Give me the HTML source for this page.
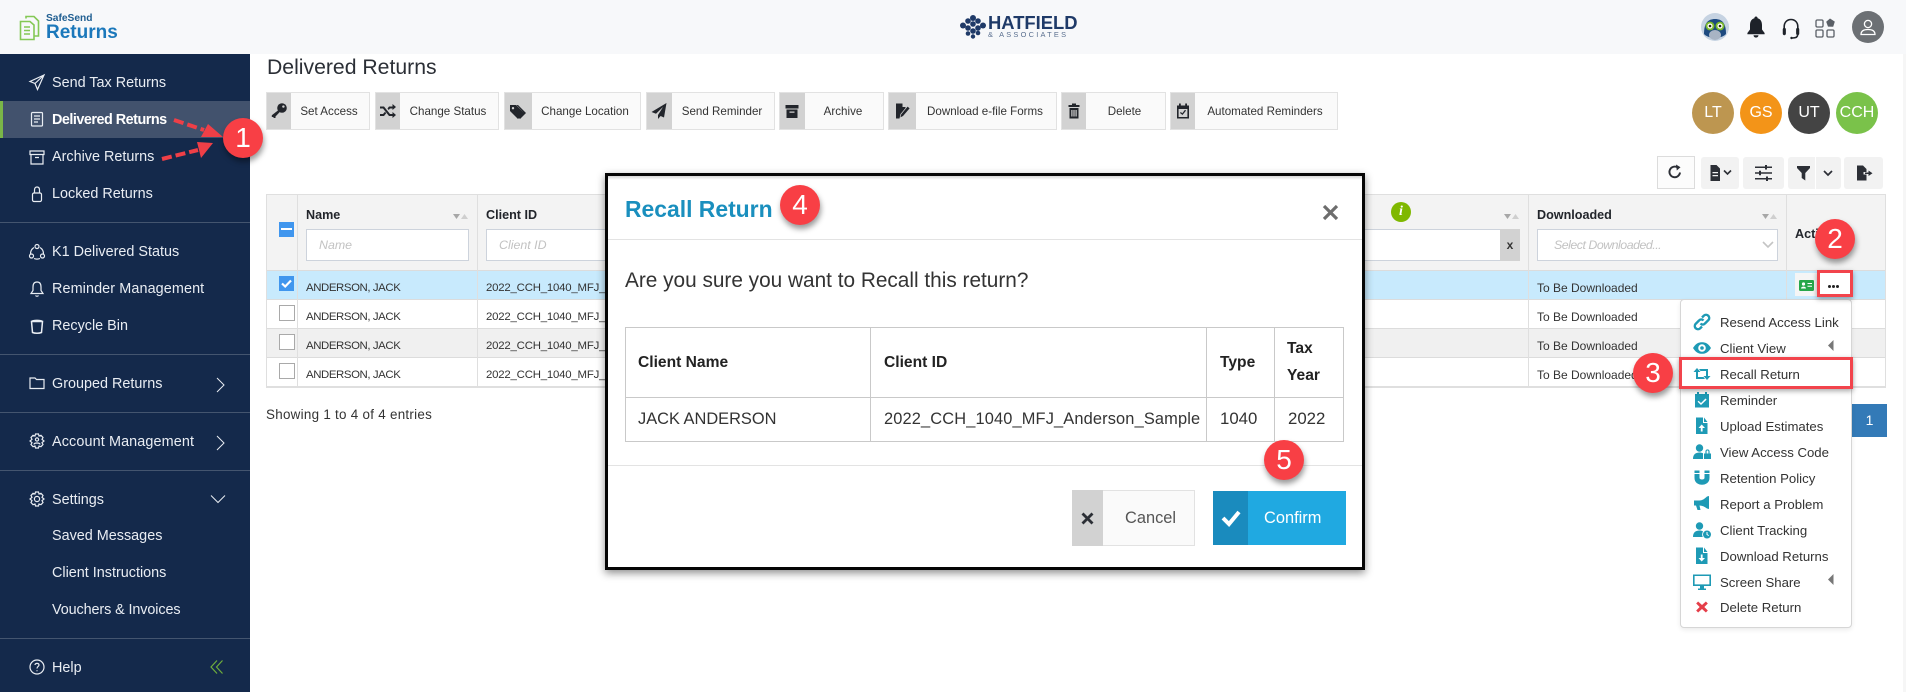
<!DOCTYPE html>
<html><head><meta charset="utf-8"><title>Delivered Returns</title>
<style>
html,body{margin:0;padding:0;background:#fff}
body{width:1906px;height:692px;position:relative;overflow:hidden;font-family:"Liberation Sans",sans-serif;color:#333}
.a{position:absolute}
.t{position:absolute;white-space:nowrap;line-height:20px;height:20px}
.s{font-size:14.4px;color:#e9edf3;left:52px}
.d{position:absolute;left:0;width:250px;height:1px;background:#44556f}
.si{position:absolute;left:28px;width:18px;height:18px;fill:none;stroke:#e9edf3;stroke-width:1.2}
.b{position:absolute;top:92px;height:36px;background:#fafafa;border:1px solid #e2e2e2;box-sizing:content-box;font-size:11.6px;color:#333;line-height:38px;text-align:center}
.b i{position:absolute;left:0;top:0;bottom:0;background:#d2d2d2;display:block}
.b svg{position:absolute;top:9px;width:18px;height:18px;fill:#22252b}
.b span{position:absolute;right:2px;top:0;bottom:0}
.c{position:absolute;width:42px;height:42px;top:92px;border-radius:50%;color:#fff;font-size:16px;line-height:42px;text-align:center}
.tb{position:absolute;top:157px;height:32px;background:#f2f2f2;border-radius:3px}
.tb svg{position:absolute;fill:#2c2f36}
.r{position:absolute;left:266px;width:1620px;height:28px;border-bottom:1px solid #dcdcdc}
.v{position:absolute;top:194px;height:193px;width:1px;background:#dfdfdf}
.n{font-size:11.4px;letter-spacing:-.4px;color:#333;left:306px}
.i{font-size:11.4px;letter-spacing:-.2px;color:#333;left:486px}
.l{font-size:12px;color:#333;left:1537px}
.k{position:absolute;left:279px;width:14px;height:14px;border:1px solid #a9a9a9;background:#fff}
.h{font-size:12.6px;font-weight:bold;color:#22252b}
.inp{position:absolute;top:229px;height:30px;border:1px solid #cdd3dc;background:#fff;box-sizing:content-box}
.ph{font-style:italic;color:#c2c2c2;font-size:12.4px}
.sort{position:absolute;width:15px;height:6px;top:214px}
.m{font-size:13.2px;color:#333;left:1720px}
.mi{position:absolute;left:1693px;width:18px;height:18px;fill:#1e9ab5}
.badge{position:absolute;width:40px;height:40px;border-radius:50%;background:#f83f45;color:#fff;font-size:28px;line-height:40px;text-align:center;box-shadow:1px 4px 6px rgba(0,0,0,.4);z-index:30}
.mc{position:absolute;font-size:16.4px;color:#333;white-space:nowrap;line-height:20px}
.mh{position:absolute;font-size:15.6px;font-weight:bold;color:#222;white-space:nowrap;line-height:20px}
</style></head><body>

<div class="a" style="left:0;top:0;width:1906px;height:54px;background:#f7f8fa"></div>
<div class="a" style="left:1903px;top:54px;width:3px;height:638px;background:#f6f6f6"></div>

<svg class="a" style="left:19px;top:15px" width="21" height="26" viewBox="0 0 21 26" fill="none" stroke="#84c855" stroke-width="1.6">
<path d="M7 3.5V1.5H15L19.5 6V21H15.5"/><path d="M1.5 6.5H11L15 10V24.5H1.5Z"/><path d="M5 12H11M5 15.5H11M5 19H11" stroke-width="1.4"/></svg>
<div class="t" style="left:46px;top:9px;font-size:10.2px;font-weight:bold;color:#1f5e91">SafeSend</div>
<div class="t" style="left:46px;top:23px;font-size:19px;font-weight:bold;color:#1b78bb">Returns</div>

<svg class="a" style="left:960px;top:15px" width="26" height="24" viewBox="0 0 26 24" fill="#1f3a68">
<circle cx="13" cy="3" r="3"/><circle cx="8" cy="6" r="2.8"/><circle cx="18" cy="6" r="2.8"/><circle cx="3" cy="10.5" r="3"/><circle cx="23" cy="10.5" r="3"/><circle cx="13" cy="9" r="2.8"/><circle cx="8" cy="13" r="2.8"/><circle cx="18" cy="13" r="2.8"/><circle cx="13" cy="16" r="2.8"/><circle cx="8" cy="18.5" r="2.3"/><circle cx="18" cy="18" r="2.3"/><circle cx="13" cy="21.5" r="2.2"/></svg>
<div class="t" style="left:988px;top:13px;font-size:18.4px;font-weight:bold;color:#1f3a68">HATFIELD</div>
<div class="t" style="left:988px;top:25px;font-size:7.4px;color:#5a6f8f;letter-spacing:2.25px">&amp; ASSOCIATES</div>

<svg class="a" style="left:1701px;top:13px" width="28" height="28" viewBox="0 0 28 28">
<circle cx="14" cy="14" r="14" fill="#c6d3e2"/><path d="M3 21C3 10 7 6 14 6S25 10 25 21C21 26 7 26 3 21Z" fill="#1d4a80"/>
<ellipse cx="14" cy="22" rx="6" ry="5" fill="#a8b4c4"/><circle cx="9" cy="13" r="4.4" fill="#7dbb2c"/><circle cx="19" cy="13" r="4.4" fill="#7dbb2c"/><circle cx="9" cy="13" r="2.6" fill="#fff"/><circle cx="19" cy="13" r="2.6" fill="#fff"/><circle cx="9" cy="13" r="1.3" fill="#222"/><circle cx="19" cy="13" r="1.3" fill="#222"/></svg>
<svg class="a" style="left:1747px;top:16px" width="18" height="22" viewBox="0 0 18 22" fill="#1e2229"><path d="M9 0.5C10 .5 10.6 1.2 10.6 2.2 13.6 3 15 5.6 15 9V13.5L17.6 17V18.2H.4V17L3 13.5V9C3 5.6 4.4 3 7.4 2.2 7.4 1.2 8 .5 9 .5Z"/><path d="M6.5 19.3H11.5C11.4 20.8 10.4 21.6 9 21.6S6.6 20.8 6.5 19.3Z"/></svg>
<svg class="a" style="left:1782px;top:18px" width="18" height="22" viewBox="0 0 18 22" fill="none" stroke="#1e2229" stroke-width="1.6"><path d="M2.2 12V8.5C2.2 4.5 5 1.5 9 1.5S15.8 4.5 15.8 8.5V12"/><rect x="1" y="10" width="2.6" height="7" rx="1.2" fill="#1e2229" stroke-width=".5"/><rect x="14.4" y="10" width="2.6" height="7" rx="1.2" fill="#1e2229" stroke-width=".5"/><path d="M15.6 17C15.6 19 14 20 10.5 20"/><circle cx="9.5" cy="20" r="1.2" fill="#1e2229" stroke="none"/></svg>
<svg class="a" style="left:1815px;top:18px" width="20" height="20" viewBox="0 0 20 20" fill="none" stroke="#5a5f66" stroke-width="1.3"><rect x="1" y="2" width="7" height="7" rx="1.2"/><rect x="1" y="12" width="7" height="7" rx="1.2"/><rect x="12" y="12" width="7" height="7" rx="1.2"/><path d="M15 .5L19.8 3.6 18.2 8.8 13 8.6 11.2 3.8Z" fill="#5a5f66" stroke="none"/></svg>
<div class="a" style="left:1852px;top:11px;width:32px;height:32px;border-radius:50%;background:#6c7074"></div>
<svg class="a" style="left:1859px;top:19px" width="18" height="17" viewBox="0 0 18 17" fill="none" stroke="#fff" stroke-width="1.3"><circle cx="9" cy="5" r="3.6"/><path d="M2 15.5C2 12 4.5 10.5 9 10.5S16 12 16 15.5Z"/></svg>

<!-- sidebar -->
<div class="a" style="left:0;top:54px;width:250px;height:638px;background:#14294b"></div>
<div class="a" style="left:0;top:101px;width:250px;height:37px;background:#42526d"></div>
<div class="a" style="left:0;top:101px;width:3px;height:37px;background:#7ab648"></div>
<svg class="si" style="top:73px" viewBox="0 0 18 18"><path d="M16 2L2 8.5 7 10.5 9.5 16.5ZM7 10.5L16 2"/></svg>
<div class="t s" style="top:73px">Send Tax Returns</div>
<svg class="si" style="top:110px" viewBox="0 0 18 18"><rect x="3.5" y="2.5" width="11" height="13.5" rx="1"/><path d="M6 6H12M6 9H12M6 12H10"/></svg>
<div class="t s" style="top:110px;font-weight:bold;color:#fff;letter-spacing:-.5px">Delivered Returns</div>
<svg class="si" style="top:148px" viewBox="0 0 18 18"><path d="M2 3H16V6.5H2ZM3 6.5V16H15V6.5M7 9.5H11"/></svg>
<div class="t s" style="top:147px">Archive Returns</div>
<svg class="si" style="top:185px" viewBox="0 0 18 18"><rect x="4.5" y="8" width="9" height="8.5" rx="1.5"/><path d="M6.5 8V5C6.5 3 7.5 2 9 2S11.5 3 11.5 5V8"/></svg>
<div class="t s" style="top:184px">Locked Returns</div>
<div class="d" style="top:222px"></div>
<svg class="si" style="top:243px" viewBox="0 0 18 18"><circle cx="9" cy="3.5" r="2"/><circle cx="3.5" cy="13" r="2"/><circle cx="14.5" cy="13" r="2"/><path d="M6 4.5C3.5 6 2.5 8 2.5 11M12 4.5C14.5 6 15.5 8 15.5 11M6 15.5C8 16.3 10 16.3 12 15.5"/></svg>
<div class="t s" style="top:242px">K1 Delivered Status</div>
<svg class="si" style="top:280px" viewBox="0 0 18 18"><path d="M9 2C5.8 2 5 4.5 5 7V10.5L3 13.5H15L13 10.5V7C13 4.5 12.2 2 9 2ZM7.5 15.5C8 16.5 10 16.5 10.5 15.5"/></svg>
<div class="t s" style="top:279px;letter-spacing:.1px">Reminder Management</div>
<svg class="si" style="top:317px" viewBox="0 0 18 18"><path d="M3.5 4.5H14.5L13.5 15.5C11 16.5 7 16.5 4.5 15.5ZM3.5 4.5C5 3 13 3 14.5 4.5" stroke-width="1.5"/></svg>
<div class="t s" style="top:316px">Recycle Bin</div>
<div class="d" style="top:354px"></div>
<svg class="si" style="top:374px" viewBox="0 0 18 18"><path d="M2 14.5V4H7L8.5 5.5H16V14.5Z"/></svg>
<div class="t s" style="top:374px">Grouped Returns</div>
<svg class="si" style="left:211px;top:376px;stroke-width:1" viewBox="0 0 18 18"><path d="M6 2L13 9 6 16"/></svg>
<div class="d" style="top:412px"></div>
<svg class="si" style="top:432px" viewBox="0 0 18 18"><path d="M7.5 2H10.5L11 4 13 3.3 15 5.5 14 7.3 16 9 14 10.7 15 12.5 13 14.7 11 14 10.5 16H7.5L7 14 5 14.7 3 12.5 4 10.7 2 9 4 7.3 3 5.5 5 3.3 7 4Z"/><circle cx="9" cy="7.5" r="1.6"/><path d="M6 12.5C6 10.5 12 10.5 12 12.5"/></svg>
<div class="t s" style="top:432px;letter-spacing:.12px">Account Management</div>
<svg class="si" style="left:211px;top:434px;stroke-width:1" viewBox="0 0 18 18"><path d="M6 2L13 9 6 16"/></svg>
<div class="d" style="top:470px"></div>
<svg class="si" style="top:490px" viewBox="0 0 18 18"><path d="M7.5 2H10.5L11 4 13 3.3 15 5.5 14 7.3 16 9 14 10.7 15 12.5 13 14.7 11 14 10.5 16H7.5L7 14 5 14.7 3 12.5 4 10.7 2 9 4 7.3 3 5.5 5 3.3 7 4Z"/><circle cx="9" cy="9" r="2.6"/></svg>
<div class="t s" style="top:490px">Settings</div>
<svg class="si" style="left:209px;top:490px;stroke-width:1" viewBox="0 0 18 18"><path d="M2 5.5L9 12.5 16 5.5"/></svg>
<div class="t s" style="top:526px">Saved Messages</div>
<div class="t s" style="top:563px">Client Instructions</div>
<div class="t s" style="top:600px;letter-spacing:-.1px">Vouchers &amp; Invoices</div>
<div class="d" style="top:638px"></div>
<svg class="si" style="top:658px" viewBox="0 0 18 18"><circle cx="9" cy="9" r="7"/><path d="M7 7C7 4.8 11 4.8 11 7 11 8.5 9 8.5 9 10.5M9 12.3V13.3"/></svg>
<div class="t s" style="top:658px">Help</div>
<svg class="si" style="left:208px;top:658px;stroke:#6fae3c" viewBox="0 0 18 18"><path d="M9 2.5L3 9 9 15.5M14.5 2.5L8.5 9 14.5 15.5"/></svg>

<!-- main -->
<div class="t" style="left:267px;top:58px;font-size:21.2px;color:#2b2f36">Delivered Returns</div>

<div class="b" style="left:266px;width:102px"><i style="width:24px"></i><svg style="left:3px" viewBox="0 0 18 18"><circle cx="12" cy="6" r="4.8"/><path d="M9.5 7.2L11 8.8 5.5 14.5 5.5 16 3.5 16 3.5 15 1.8 15 1.8 13.2Z"/><circle cx="13.4" cy="4.6" r="1.2" fill="#d2d2d2"/></svg><span style="left:24px">Set Access</span></div>
<div class="b" style="left:375px;width:122px"><i style="width:24px"></i><svg style="left:3px" viewBox="0 0 18 18"><path d="M1 4.5H5L11 12H13.5V10L17 13 13.5 16V14H10L4 6.5H1ZM1 12H4L6 9.7 7.2 11.2 5 14H1ZM10 4.5H13.5V2L17 5 13.5 8V6.5H11L9.7 8 8.5 6.5Z"/></svg><span style="left:24px">Change Status</span></div>
<div class="b" style="left:504px;width:135px"><i style="width:27px"></i><svg style="left:4px" viewBox="0 0 18 18"><path d="M1 3V9L9 17 15 11 7 3ZM4 5A1.2 1.2 0 1 1 4 7.4 1.2 1.2 0 0 1 4 5ZM9 3L17 11 11 17 10 16 15 11 7.5 3Z"/></svg><span style="left:27px">Change Location</span></div>
<div class="b" style="left:646px;width:127px"><i style="width:25px"></i><svg style="left:3px" viewBox="0 0 18 18"><path d="M16.5 1L1.5 10 6 11.8 13 5 8 13V17L10.6 14 14 15.5Z"/></svg><span style="left:25px">Send Reminder</span></div>
<div class="b" style="left:779px;width:103px"><i style="width:25px"></i><svg style="left:3px" viewBox="0 0 18 18"><path d="M2.5 3H15.5V6.5H2.5ZM3.5 7.5H14.5V16H3.5ZM6.5 9.5V10.7H11.5V9.5Z"/></svg><span style="left:25px">Archive</span></div>
<div class="b" style="left:888px;width:167px"><i style="width:27px"></i><svg style="left:4px" viewBox="0 0 18 18"><path d="M3 1.5H9.5V5H12.5V6L7.5 12 6.5 16.5H3Z"/><path d="M14.6 4.6L16.6 6.4 10 14 7.4 15.4 8.2 12.4Z"/></svg><span style="left:27px">Download e-file Forms</span></div>
<div class="b" style="left:1061px;width:103px"><i style="width:24px"></i><svg style="left:3px" viewBox="0 0 18 18"><path d="M3.5 3H7V1.5H11V3H14.5V5H3.5ZM4.5 6H13.5V16.5H4.5ZM6.3 8V14.5H7.5V8ZM8.4 8V14.5H9.6V8ZM10.5 8V14.5H11.7V8Z"/></svg><span style="left:24px">Delete</span></div>
<div class="b" style="left:1170px;width:166px"><i style="width:24px"></i><svg style="left:3px" viewBox="0 0 18 18"><path d="M5 1.5H6.8V3.5H11.2V1.5H13V3.5H15V16.5H3V3.5H5ZM4.6 7V15H13.4V7ZM12 8.6L8.5 13 6 11 6.8 10 8.3 11.3 11 7.8Z" fill-rule="evenodd"/></svg><span style="left:24px">Automated Reminders</span></div>

<div class="c" style="left:1692px;background:#bd9650">LT</div>
<div class="c" style="left:1740px;background:#f39418">GS</div>
<div class="c" style="left:1788px;background:#444">UT</div>
<div class="c" style="left:1836px;background:#7ac24a">CCH</div>

<div class="a" style="left:1657px;top:156px;width:36px;height:31px;border:1px solid #dcdcdc;background:#fcfcfc"></div>
<svg class="a" style="left:1667px;top:164px" width="16" height="16" viewBox="0 0 16 16" fill="none" stroke="#2c2f36" stroke-width="1.9"><path d="M13 8.5A5.3 5.3 0 1 1 10.5 3.4"/><path d="M9 .5L13.5 3.2 9.8 6.5Z" fill="#2c2f36" stroke="none"/></svg>
<div class="tb" style="left:1701px;width:38px"><svg style="left:8px;top:7px" width="24" height="18" viewBox="0 0 24 18"><path d="M1.5 1H7.5L11 4.5V17H1.5ZM3.5 8V9.3H9V8ZM3.5 11V12.3H9V11Z" fill-rule="evenodd"/><path d="M15 6.5L18.5 10 22 6.5" fill="none" stroke="#2c2f36" stroke-width="1.6"/></svg></div>
<div class="tb" style="left:1743px;width:41px"><svg style="left:12px;top:8px" width="17" height="16" viewBox="0 0 17 16"><path d="M0 1.5H17V3H0ZM0 7.2H17V8.8H0ZM0 13H17V14.5H0ZM10 0H12V4.5H10ZM4 5.7H6V10.3H4ZM11 11.5H13V16H11Z"/></svg></div>
<div class="tb" style="left:1788px;width:53px"><svg style="left:9px;top:8px" width="13" height="16" viewBox="0 0 13 16"><path d="M0 1H13V3L8.3 8V15.5L4.7 13V8L0 3Z"/></svg><div class="a" style="left:27px;top:0;width:1px;height:32px;background:#fff"></div><svg style="left:35px;top:13px" width="10" height="7" viewBox="0 0 10 7"><path d="M1 1L5 5 9 1" fill="none" stroke="#2c2f36" stroke-width="1.7"/></svg></div>
<div class="tb" style="left:1844px;width:39px"><svg style="left:12px;top:8px" width="18" height="16" viewBox="0 0 18 16"><path d="M1 .5H7L10.5 4V7H7.5V9.5H10.5V15.5H1ZM9 7.5H12.5V5.5L16.5 8.3 12.5 11V9H9Z"/></svg></div>

<!-- table -->
<div class="a" style="left:266px;top:194px;height:77px;background:#f3f3f3;border:1px solid #dfdfdf;border-bottom:1px solid #dcdcdc;box-sizing:border-box;width:1620px"></div>
<div class="r" style="top:271px;background:#c8eafd"></div>
<div class="r" style="top:300px;background:#fff"></div>
<div class="r" style="top:329px;background:#f0f0f0"></div>
<div class="r" style="top:358px;background:#fff"></div>
<div class="a" style="left:266px;top:386px;width:1620px;height:2px;background:#dfdfdf"></div>
<div class="v" style="left:266px"></div><div class="v" style="left:297px"></div><div class="v" style="left:477px"></div><div class="v" style="left:1528px"></div><div class="v" style="left:1786px"></div><div class="v" style="left:1885px"></div>

<div class="a" style="left:279px;top:222px;width:15px;height:15px;background:#4096ee"></div>
<div class="a" style="left:281px;top:228px;width:11px;height:2px;background:#fff"></div>
<div class="a" style="left:279px;top:276px;width:15px;height:15px;background:#4096ee"></div>
<svg class="a" style="left:279px;top:276px" width="15" height="15" viewBox="0 0 15 15"><path d="M3 7.5L6.2 10.5 12 4.5" fill="none" stroke="#fff" stroke-width="2.2"/></svg>
<div class="k" style="top:305px"></div><div class="k" style="top:334px"></div><div class="k" style="top:363px"></div>

<div class="t h" style="left:306px;top:205px">Name</div>
<div class="t h" style="left:486px;top:205px">Client ID</div>
<div class="t h" style="left:1537px;top:205px">Downloaded</div>
<div class="t h" style="left:1795px;top:224px">Actions</div>
<svg class="sort" style="left:453px" viewBox="0 0 15 6"><path d="M0 0H7L3.5 5Z" fill="#a7a7a7"/><path d="M8 5H15L11.5 0Z" fill="#cfcfcf"/></svg>
<svg class="sort" style="left:1504px" viewBox="0 0 15 6"><path d="M0 0H7L3.5 5Z" fill="#a7a7a7"/><path d="M8 5H15L11.5 0Z" fill="#cfcfcf"/></svg>
<svg class="sort" style="left:1762px" viewBox="0 0 15 6"><path d="M0 0H7L3.5 5Z" fill="#a7a7a7"/><path d="M8 5H15L11.5 0Z" fill="#cfcfcf"/></svg>

<div class="inp" style="left:306px;width:161px"></div><div class="t ph" style="left:319px;top:235px">Name</div>
<div class="inp" style="left:486px;width:200px"></div><div class="t ph" style="left:499px;top:235px">Client ID</div>
<div class="inp" style="left:1340px;width:159px"></div>
<div class="a" style="left:1500px;top:229px;width:20px;height:32px;background:#d2d2d2;font-size:12px;font-weight:bold;text-align:center;line-height:32px">x</div>
<div class="a" style="left:1391px;top:202px;width:20px;height:20px;border-radius:50%;background:#7fb800;color:#fff;font:italic bold 14px/20px 'Liberation Serif',serif;text-align:center">i</div>
<div class="inp" style="left:1537px;width:239px"></div><div class="t ph" style="left:1554px;top:235px;letter-spacing:-.5px">Select Downloaded...</div>
<svg class="a" style="left:1762px;top:241px" width="12" height="8" viewBox="0 0 12 8"><path d="M1 1L6 6 11 1" fill="none" stroke="#c4c4c4" stroke-width="1.6"/></svg>

<div class="t n" style="top:278px">ANDERSON, JACK</div><div class="t n" style="top:307px">ANDERSON, JACK</div><div class="t n" style="top:336px">ANDERSON, JACK</div><div class="t n" style="top:365px">ANDERSON, JACK</div>
<div class="t i" style="top:278px">2022_CCH_1040_MFJ_Anderson_Sample</div><div class="t i" style="top:307px">2022_CCH_1040_MFJ_Anderson_Sample</div><div class="t i" style="top:336px">2022_CCH_1040_MFJ_Anderson_Sample</div><div class="t i" style="top:365px">2022_CCH_1040_MFJ_Anderson_Sample</div>
<div class="t l" style="top:278px">To Be Downloaded</div><div class="t l" style="top:307px">To Be Downloaded</div><div class="t l" style="top:336px">To Be Downloaded</div><div class="t l" style="top:365px">To Be Downloaded</div>

<div class="a" style="left:1795px;top:273px;width:22px;height:23px;background:#f5f5f5"></div>
<svg class="a" style="left:1799px;top:280px" width="15" height="11" viewBox="0 0 15 11"><rect width="15" height="11" rx="1.2" fill="#27a74a"/><circle cx="4.5" cy="4" r="1.6" fill="#fff"/><path d="M2 8.5C2 6 7 6 7 8.5ZM8.5 3H13V4H8.5ZM8.5 5.8H13V6.8H8.5Z" fill="#fff"/></svg>
<div class="a" style="left:1819px;top:272px;width:32px;height:24px;background:#fff"></div>
<div class="a" style="left:1832px;top:285px;width:3px;height:3px;border-radius:50%;background:#222;box-shadow:4px 0 #222,-4px 0 #222"></div>

<div class="t" style="left:266px;top:405px;font-size:13.4px;color:#333;letter-spacing:.28px">Showing 1 to 4 of 4 entries</div>
<div class="a" style="left:1852px;top:404px;width:35px;height:33px;background:#337ab7;color:#fff;font-size:14px;line-height:33px;text-align:center">1</div>

<!-- dropdown -->
<div class="a" style="left:1680px;top:299px;width:172px;height:329px;background:#fff;border:1px solid #d6d6d6;border-radius:4px;box-sizing:border-box;box-shadow:0 2px 5px rgba(0,0,0,.08)"></div>
<svg class="mi" style="top:313px" viewBox="0 0 18 18"><path d="M7.5 10.5A3 3 0 0 0 12 10.5L15.5 7A3.2 3.2 0 0 0 11 2.5L9 4.5M10.5 7.5A3 3 0 0 0 6 7.5L2.5 11A3.2 3.2 0 0 0 7 15.5L9 13.5" fill="none" stroke="#1e9ab5" stroke-width="2.4"/></svg>
<div class="t m" style="top:313px">Resend Access Link</div>
<svg class="mi" style="top:339px" viewBox="0 0 18 18"><path d="M0 9C3 4 6 3.2 9 3.2S15 4 18 9C15 14 12 14.8 9 14.8S3 14 0 9ZM9 5.2A3.8 3.8 0 1 0 9 12.8 3.8 3.8 0 0 0 9 5.2ZM9 7.2A1.8 1.8 0 1 1 9 10.8 1.8 1.8 0 0 1 9 7.2Z" fill-rule="evenodd"/></svg>
<div class="t m" style="top:339px">Client View</div>
<svg class="a" style="left:1828px;top:340px" width="6" height="11" viewBox="0 0 6 11"><path d="M5.5 0V11L0 5.5Z" fill="#777"/></svg>
<svg class="mi" style="top:365px" viewBox="0 0 18 18"><path d="M4 3L7.5 7H5V12H10.5L12 14H3V7H.5ZM14 15L10.5 11H13V6H7.5L6 4H15V11H17.5Z"/></svg>
<div class="t m" style="top:365px">Recall Return</div>
<svg class="mi" style="top:391px" viewBox="0 0 18 18"><path d="M4 1H6V3H12V1H14V3H16V16.5H2V3H4ZM12.5 7.5L8 12 5.5 9.7 4.6 10.8 8 14 13.6 8.6Z" fill-rule="evenodd"/></svg>
<div class="t m" style="top:391px">Reminder</div>
<svg class="mi" style="top:417px" viewBox="0 0 18 18"><path d="M3 .5H10V6H14.5V17H3ZM11 .5L14.5 5H11ZM8.7 7.5L5.5 11H7.8V14.5H9.6V11H12Z" fill-rule="evenodd"/></svg>
<div class="t m" style="top:417px">Upload Estimates</div>
<svg class="mi" style="top:443px" viewBox="0 0 18 18"><circle cx="6.5" cy="5" r="3.7"/><path d="M0 16C0 11 3 9.5 6.5 9.5 8 9.5 9 9.8 10 10.3V16ZM11 10.5H18V16H11ZM12.4 10.5V8.5C12.4 5.6 16.6 5.6 16.6 8.5V10.5H15.4V8.5C15.4 7.2 13.6 7.2 13.6 8.5V10.5Z"/></svg>
<div class="t m" style="top:443px">View Access Code</div>
<svg class="mi" style="top:469px" viewBox="0 0 18 18"><path d="M1.5 1.5H6.5V9C6.5 11 11.5 11 11.5 9V1.5H16.5V9C16.5 18 1.5 18 1.5 9ZM1.5 4H6.5V5H1.5ZM11.5 4H16.5V5H11.5Z" fill-rule="evenodd"/></svg>
<div class="t m" style="top:469px">Retention Policy</div>
<svg class="mi" style="top:495px" viewBox="0 0 18 18"><path d="M14 1.5L16 1V14L14 13.5C11.5 11.5 9 10.5 6.5 10.5L7.5 15H4.5L3 10.5H1V5.5H6.5C9 5.5 11.5 4 14 1.5Z"/></svg>
<div class="t m" style="top:495px">Report a Problem</div>
<svg class="mi" style="top:521px" viewBox="0 0 18 18"><circle cx="6.5" cy="5" r="3.7"/><path d="M0 16C0 11 3 9.5 6.5 9.5 8 9.5 9 9.8 10 10.3 8.8 13 9 14.5 9.8 16Z"/><path d="M14 9.5A4 4 0 1 0 14 17.5 4 4 0 0 0 14 9.5ZM13.5 11H14.5V13.2L16 14.2 15.5 15 13.5 13.7Z" fill-rule="evenodd"/></svg>
<div class="t m" style="top:521px">Client Tracking</div>
<svg class="mi" style="top:547px" viewBox="0 0 18 18"><path d="M3 .5H10V6H14.5V17H3ZM11 .5L14.5 5H11ZM8.7 14.5L5.5 11H7.8V7.5H9.6V11H12Z" fill-rule="evenodd"/></svg>
<div class="t m" style="top:547px">Download Returns</div>
<svg class="mi" style="top:573px" viewBox="0 0 18 18"><path d="M0 1.5H18V13H11V15.5H13V17H5V15.5H7V13H0ZM1.6 3V11.4H16.4V3Z" fill-rule="evenodd"/></svg>
<div class="t m" style="top:573px">Screen Share</div>
<svg class="a" style="left:1828px;top:574px" width="6" height="11" viewBox="0 0 6 11"><path d="M5.5 0V11L0 5.5Z" fill="#777"/></svg>
<svg class="mi" style="left:1695px;top:600px;width:14px;height:14px;fill:#e53e49" viewBox="0 0 18 18"><path d="M4 2L9 6.5 14 2 16.5 4.5 12 9 16.5 13.5 14 16 9 11.5 4 16 1.5 13.5 6 9 1.5 4.5Z"/></svg>
<div class="t m" style="top:598px">Delete Return</div>

<!-- red highlight boxes -->
<div class="a" style="left:1817px;top:270px;width:36px;height:27px;border:3px solid #f2444c;box-sizing:border-box;box-shadow:0 2px 5px rgba(0,0,0,.35);z-index:20"></div>
<div class="a" style="left:1679px;top:357px;width:174px;height:32px;border:3px solid #f2444c;box-sizing:border-box;box-shadow:0 2px 5px rgba(0,0,0,.35);z-index:20"></div>

<!-- arrows -->
<svg class="a" style="left:160px;top:115px;z-index:25" width="70" height="50" viewBox="0 0 70 50" fill="none">
<path d="M14 5L44 15" stroke="#ef3f47" stroke-width="4" stroke-dasharray="10 4"/><path d="M48 9L63 22 41 22Z" fill="#ef3f47"/>
<path d="M2 44L38 35" stroke="#ef3f47" stroke-width="4" stroke-dasharray="10 4"/><path d="M37 27L53 28 41 43Z" fill="#ef3f47"/></svg>

<!-- modal -->
<div class="a" style="left:605px;top:173px;width:760px;height:397px;background:#fff;border:3px solid #050505;box-sizing:border-box;box-shadow:0 3px 8px rgba(0,0,0,.45);z-index:10"></div>
<div style="position:absolute;left:0;top:0;z-index:11">
<div class="a" style="left:608px;top:176px;width:754px;height:4px;background:linear-gradient(#d5d5d5,#fff)"></div>
<div class="t" style="left:625px;top:199px;font-size:22.9px;font-weight:bold;color:#1a8fbe">Recall Return</div>
<svg class="a" style="left:1322px;top:204px" width="17" height="17" viewBox="0 0 17 17"><path d="M2 2L15 15M15 2L2 15" stroke="#6d6d6d" stroke-width="3.2"/></svg>
<div class="a" style="left:608px;top:239px;width:754px;height:1px;background:#e3e3e3"></div>
<div class="t" style="left:625px;top:271px;font-size:20.8px;color:#333">Are you sure you want to Recall this return?</div>
<div class="a" style="left:625px;top:327px;width:719px;height:115px;border:1px solid #c9c9c9;box-sizing:border-box"></div>
<div class="a" style="left:625px;top:397px;width:719px;height:1px;background:#c9c9c9"></div>
<div class="a" style="left:870px;top:327px;width:1px;height:115px;background:#c9c9c9"></div>
<div class="a" style="left:1206px;top:327px;width:1px;height:115px;background:#c9c9c9"></div>
<div class="a" style="left:1274px;top:327px;width:1px;height:115px;background:#c9c9c9"></div>
<div class="mh" style="left:638px;top:353px">Client Name</div>
<div class="mh" style="left:884px;top:353px">Client ID</div>
<div class="mh" style="left:1220px;top:353px">Type</div>
<div class="mh" style="left:1287px;top:339px">Tax</div>
<div class="mh" style="left:1287px;top:366px">Year</div>
<div class="mc" style="left:638px;top:409px">JACK ANDERSON</div>
<div class="mc" style="left:884px;top:409px;letter-spacing:.14px">2022_CCH_1040_MFJ_Anderson_Sample</div>
<div class="mc" style="left:1220px;top:409px;font-size:16.8px">1040</div>
<div class="mc" style="left:1288px;top:409px;font-size:16.8px">2022</div>
<div class="a" style="left:608px;top:465px;width:754px;height:1px;background:#e3e3e3"></div>
<div class="a" style="left:1072px;top:490px;width:123px;height:56px;background:#fafafa;border:1px solid #e2e2e2;box-sizing:border-box"></div>
<div class="a" style="left:1072px;top:490px;width:31px;height:56px;background:#d2d2d2"></div>
<svg class="a" style="left:1081px;top:512px" width="13" height="13" viewBox="0 0 13 13"><path d="M1.5 1.5L11.5 11.5M11.5 1.5L1.5 11.5" stroke="#2c2f36" stroke-width="2.8"/></svg>
<div class="t" style="left:1125px;top:508px;font-size:16.4px;color:#555">Cancel</div>
<div class="a" style="left:1213px;top:491px;width:133px;height:54px;background:#20a9e1"></div>
<div class="a" style="left:1213px;top:491px;width:35px;height:54px;background:#1a8bbe"></div>
<svg class="a" style="left:1221px;top:509px" width="20" height="18" viewBox="0 0 20 18"><path d="M2 9L8 15 18 3" fill="none" stroke="#fff" stroke-width="4"/></svg>
<div class="t" style="left:1264px;top:508px;font-size:16.4px;color:#fff">Confirm</div>
</div>

<div class="badge" style="left:223px;top:118px">1</div>
<div class="badge" style="left:1815px;top:219px">2</div>
<div class="badge" style="left:1633px;top:353px">3</div>
<div class="badge" style="left:780px;top:185px">4</div>
<div class="badge" style="left:1264px;top:440px">5</div>
</body></html>
